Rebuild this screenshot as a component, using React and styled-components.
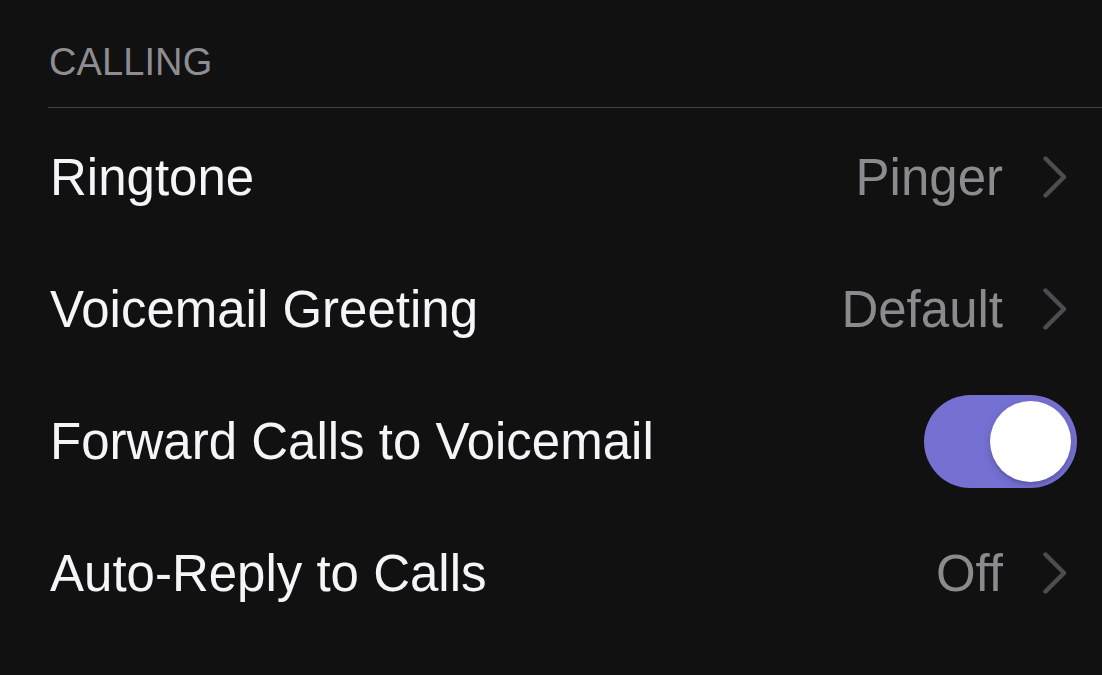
import React from "react";
import styled, { createGlobalStyle } from "styled-components";

const Global = createGlobalStyle`
  html, body { margin: 0; padding: 0; background: #111111; }
  body { font-family: "Liberation Sans", Arial, sans-serif; -webkit-font-smoothing: antialiased; }
  * { box-sizing: border-box; }
`;

const Page = styled.div`
  width: 1102px;
  height: 675px;
  background: #111111;
  overflow: hidden;
  padding-left: 48px;
`;

const SectionHeader = styled.div`
  padding: 44px 0 26px 1px;
  font-size: 38px;
  line-height: 37px;
  color: #8d8d92;
  letter-spacing: 0.1px;
  border-bottom: 1px solid #444446;
`;

const List = styled.div`
  display: flex;
  flex-direction: column;
  padding-top: 3px;
`;

const Row = styled.div`
  height: 132px;
  display: flex;
  align-items: center;
  justify-content: space-between;
  padding-left: 2px;
  padding-right: ${(p) => (p.$toggle ? "25px" : "35px")};
`;

const Label = styled.span`
  font-size: 51px;
  line-height: 51px;
  color: #f5f5f7;
`;

const Trailing = styled.div`
  display: flex;
  align-items: center;
  gap: 40px;
`;

const Value = styled.span`
  font-size: 51px;
  line-height: 51px;
  color: #8a8a8f;
`;

const Track = styled.div`
  width: 153px;
  height: 93px;
  border-radius: 47px;
  background: #7571d3;
  display: flex;
  align-items: center;
  justify-content: ${(p) => (p.$on ? "flex-end" : "flex-start")};
  padding: 0 6px;
`;

const Knob = styled.div`
  width: 81px;
  height: 81px;
  border-radius: 50%;
  background: #ffffff;
  box-shadow: 0 3px 8px rgba(0, 0, 0, 0.18), 0 3px 1px rgba(0, 0, 0, 0.06);
`;

const Chevron = () => (
  <svg width="24" height="42" viewBox="0 0 24 42" style={{ display: "block" }}>
    <polyline
      points="2.5,2.5 21,21 2.5,39.5"
      fill="none"
      stroke="#4d4d50"
      strokeWidth="4.4"
      strokeLinecap="round"
      strokeLinejoin="round"
    />
  </svg>
);

const rows = [
  { label: "Ringtone", value: "Pinger" },
  { label: "Voicemail Greeting", value: "Default" },
  { label: "Forward Calls to Voicemail", toggle: true },
  { label: "Auto-Reply to Calls", value: "Off" },
];

export default function App() {
  return (
    <>
      <Global />
      <Page>
        <SectionHeader>CALLING</SectionHeader>
        <List>
          {rows.map((r) => (
            <Row key={r.label} $toggle={r.toggle}>
              <Label>{r.label}</Label>
              {r.toggle ? (
                <Track $on>
                  <Knob />
                </Track>
              ) : (
                <Trailing>
                  <Value>{r.value}</Value>
                  <Chevron />
                </Trailing>
              )}
            </Row>
          ))}
        </List>
      </Page>
    </>
  );
}
